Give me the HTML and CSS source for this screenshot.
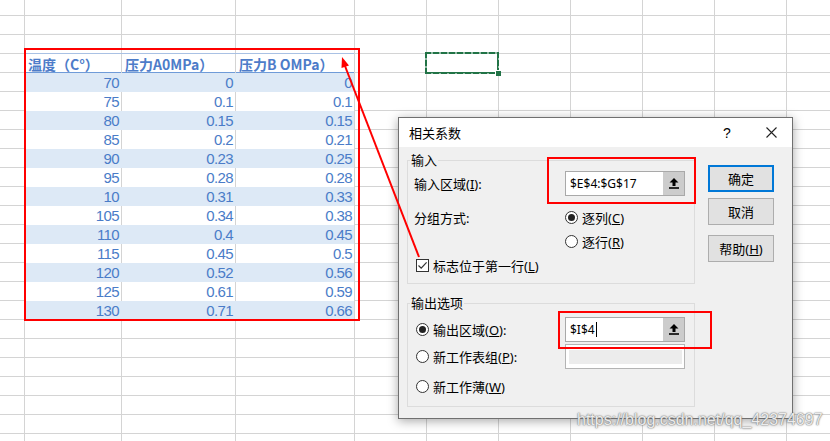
FILE: index.html
```html
<!DOCTYPE html>
<html lang="zh-CN">
<head>
    <meta charset="UTF-8">
    <title>相关系数</title>
    <link rel="stylesheet" href="styles.css">
</head>
<body>
    <!-- 工作表 -->
    <div class="sheet">
        <div class="datatable">
            <div class="trow thead">
                <div class="c">温度（C°）</div>
                <div class="c">压力A0MPa）</div>
                <div class="c">压力B OMPa）</div>
            </div>
            <div class="trow band"><div class="c">70</div><div class="c">0</div><div class="c">0</div></div>
            <div class="trow"><div class="c">75</div><div class="c">0.1</div><div class="c">0.1</div></div>
            <div class="trow band"><div class="c">80</div><div class="c">0.15</div><div class="c">0.15</div></div>
            <div class="trow"><div class="c">85</div><div class="c">0.2</div><div class="c">0.21</div></div>
            <div class="trow band"><div class="c">90</div><div class="c">0.23</div><div class="c">0.25</div></div>
            <div class="trow"><div class="c">95</div><div class="c">0.28</div><div class="c">0.28</div></div>
            <div class="trow band"><div class="c">10</div><div class="c">0.31</div><div class="c">0.33</div></div>
            <div class="trow"><div class="c">105</div><div class="c">0.34</div><div class="c">0.38</div></div>
            <div class="trow band"><div class="c">110</div><div class="c">0.4</div><div class="c">0.45</div></div>
            <div class="trow"><div class="c">115</div><div class="c">0.45</div><div class="c">0.5</div></div>
            <div class="trow band"><div class="c">120</div><div class="c">0.52</div><div class="c">0.56</div></div>
            <div class="trow"><div class="c">125</div><div class="c">0.61</div><div class="c">0.59</div></div>
            <div class="trow band"><div class="c">130</div><div class="c">0.71</div><div class="c">0.66</div></div>
        </div>
        <!-- 复制选区 -->
        <div class="selection"></div>
    </div>

    <!-- 对话框 -->
    <div class="dialog">
        <div class="titlebar">
            <span class="title">相关系数</span>
            <span class="tb-help">?</span>
            <span class="tb-close">
                <svg width="11" height="11" viewBox="0 0 11 11"><path d="M0.5 0.5 L10.5 10.5 M10.5 0.5 L0.5 10.5" stroke="#222" stroke-width="1.1" fill="none"/></svg>
            </span>
        </div>
        <div class="dlg-body">
            <div class="groups">
                <fieldset class="group group-in">
                    <legend>输入</legend>
                    <div class="row row-first">
                        <span class="lbl">输入区域(<u>I</u>):</span>
                        <div class="refbox">
                            <span class="reftext">$E$4:$G$17</span>
                            <span class="refbtn">
                                <svg width="10" height="11" viewBox="0 0 10 11"><path d="M5 0 L9.5 4.6 L6.5 4.6 L6.5 8 L3.5 8 L3.5 4.6 L0.5 4.6 Z" fill="#000"/><rect x="0" y="9.2" width="10" height="1.6" fill="#000"/></svg>
                            </span>
                        </div>
                    </div>
                    <div class="row row-gap">
                        <span class="lbl">分组方式:</span>
                        <label class="opt"><span class="radio on"></span><span>逐列(<u>C</u>)</span></label>
                    </div>
                    <div class="row">
                        <span class="lbl"></span>
                        <label class="opt"><span class="radio"></span><span>逐行(<u>R</u>)</span></label>
                    </div>
                    <div class="row">
                        <label class="opt opt-side">
                            <span class="check">
                                <svg width="11" height="11" viewBox="0 0 11 11"><path d="M1.5 5.5 L4.2 8.2 L9.6 2.4" stroke="#333" stroke-width="1.2" fill="none"/></svg>
                            </span>
                            <span>标志位于第一行(<u>L</u>)</span>
                        </label>
                    </div>
                </fieldset>

                <fieldset class="group group-out">
                    <legend>输出选项</legend>
                    <div class="row row-first">
                        <label class="opt opt-side lbl"><span class="radio on"></span><span>输出区域(<u>O</u>):</span></label>
                        <div class="refbox">
                            <span class="reftext">$I$4<span class="caret"></span></span>
                            <span class="refbtn">
                                <svg width="10" height="11" viewBox="0 0 10 11"><path d="M5 0 L9.5 4.6 L6.5 4.6 L6.5 8 L3.5 8 L3.5 4.6 L0.5 4.6 Z" fill="#000"/><rect x="0" y="9.2" width="10" height="1.6" fill="#000"/></svg>
                            </span>
                        </div>
                    </div>
                    <div class="row row-near">
                        <label class="opt opt-side lbl"><span class="radio"></span><span>新工作表组(<u>P</u>):</span></label>
                        <div class="namebox"><div class="namebox-in"></div></div>
                    </div>
                    <div class="row row-last">
                        <label class="opt opt-side"><span class="radio"></span><span>新工作薄(<u>W</u>)</span></label>
                    </div>
                </fieldset>
            </div>

            <div class="buttons">
                <button class="btn btn-default">确定</button>
                <button class="btn btn-cancel">取消</button>
                <button class="btn btn-help">帮助(<u>H</u>)</button>
            </div>
        </div>
    </div>

    <!-- 标注 -->
    <div class="mark mark-table"></div>
    <div class="mark mark-in"></div>
    <div class="mark mark-out"></div>
    <svg class="arrow" width="830" height="441" viewBox="0 0 830 441">
        <line x1="419" y1="257" x2="345" y2="66" stroke="#f00" stroke-width="2"/>
        <polygon points="342,57 349,65.5 341.5,68" fill="#f00"/>
    </svg>

    <div class="watermark">https://blog.csdn.net/qq_42374697</div>
</body>
</html>
```

FILE: styles.css
```css
body {
    margin: 0;
    width: 830px;
    height: 441px;
    overflow: hidden;
    position: relative;
    font-family: "Noto Sans CJK SC", sans-serif;
    background: #fff;
}

/* 工作表网格 */
.sheet {
    display: grid;
    grid-template-columns: 24px 96px 113px 118px repeat(6, 71px) 1fr;
    grid-template-rows: 15px repeat(23, 18px);
    gap: 1px;
    height: 441px;
    background-color: #fff;
    background-image:
        linear-gradient(#d4d4d4 0 1px, transparent 1px),
        linear-gradient(to right,
            transparent 24px, #d4d4d4 24px 25px,
            transparent 25px 121px, #d4d4d4 121px 122px,
            transparent 122px 235px, #d4d4d4 235px 236px,
            transparent 236px 354px, #d4d4d4 354px 355px,
            transparent 355px 426px, #d4d4d4 426px 427px,
            transparent 427px 498px, #d4d4d4 498px 499px,
            transparent 499px 570px, #d4d4d4 570px 571px,
            transparent 571px 642px, #d4d4d4 642px 643px,
            transparent 643px 714px, #d4d4d4 714px 715px,
            transparent 715px 786px, #d4d4d4 786px 787px,
            transparent 787px);
    background-size: 100% 19px, 100% 100%;
    background-position: 0 15px, 0 0;
    background-repeat: repeat-y, no-repeat;
}

.datatable {
    grid-column: 2 / 5;
    grid-row: 4 / 18;
    margin: -1px 0;
    display: flex;
    flex-direction: column;
    background: #fff;
    color: #4a7cc8;
}

.trow {
    display: grid;
    grid-template-columns: 97px 114px 118px;
    height: 19px;
    box-sizing: border-box;
}

.trow .c {
    border-right: 1px solid #d4d4d4;
    text-align: right;
    padding: 1px 2px 0 0;
    font-family: "Liberation Sans", Arial, sans-serif;
    font-size: 15px;
    letter-spacing: -0.6px;
    line-height: 18px;
}

.trow .c:last-child {
    border-right: 0;
}

.trow.band {
    background: #dde9f6;
}

.trow.band .c {
    border-right-color: transparent;
}

.thead {
    height: 20px;
    border-top: 1px solid #a9c1e4;
    border-bottom: 1px solid #6f9bd8;
}

.thead .c {
    text-align: left;
    padding: 1px 0 0 3px;
    font-family: "Noto Sans CJK SC", sans-serif;
    font-size: 14px;
    font-weight: 700;
    letter-spacing: 0;
    line-height: 18px;
    color: #4d7cc9;
}

.selection {
    grid-column: 6;
    grid-row: 4;
    margin: -2px -1px -2px -2px;
    border: 2px solid #217346;
    position: relative;
}

.selection::before {
    content: "";
    position: absolute;
    inset: -2px;
    background:
        repeating-linear-gradient(90deg, transparent 0 6px, #fff 6px 8px) top left / 100% 1px no-repeat,
        repeating-linear-gradient(90deg, transparent 0 6px, #fff 6px 8px) bottom left / 100% 1px no-repeat,
        repeating-linear-gradient(180deg, transparent 0 6px, #fff 6px 8px) top left / 1px 100% no-repeat,
        repeating-linear-gradient(180deg, transparent 0 6px, #fff 6px 8px) top right / 1px 100% no-repeat;
    transform: translate(0.5px, 0.5px);
}

.selection::after {
    content: "";
    position: absolute;
    right: -4px;
    bottom: -4px;
    width: 5px;
    height: 5px;
    background: #217346;
    border: 1px solid #fff;
    border-width: 1px 0 0 1px;
}

/* 对话框 */
.dialog {
    position: absolute;
    left: 398px;
    top: 117px;
    width: 395px;
    height: 302px;
    box-sizing: border-box;
    border: 1px solid #707070;
    background: #f0f0f0;
    box-shadow: 0 2px 10px rgba(0, 0, 0, 0.35);
    font-family: "Noto Sans", "Noto Sans CJK SC", sans-serif;
    font-size: 13px;
    color: #000;
}

.titlebar {
    display: flex;
    align-items: center;
    height: 29px;
    background: #fff;
}

.title {
    flex: 1;
    padding-left: 10px;
}

.tb-help {
    width: 46px;
    text-align: center;
    font-family: "Liberation Sans", Arial, sans-serif;
    font-size: 14px;
}

.tb-close {
    width: 42px;
    display: flex;
    justify-content: center;
}

.dlg-body {
    display: flex;
    gap: 13px;
    padding: 5px 0 0 8px;
}

.groups {
    width: 288px;
}

.group {
    margin: 0;
    padding: 0 0 6px 6px;
    border: 1px solid #dcdcdc;
    min-width: 0;
}

.group legend {
    margin-left: -4px;
    padding: 0 1px;
    line-height: 17px;
}

.group-out {
    margin-top: 11px;
    padding-bottom: 8px;
}

.row {
    display: flex;
    align-items: center;
    height: 24px;
}

.row-first {
    height: 25px;
}

.group-in .row-first {
    margin-top: 2px;
}

.group-out .row-first {
    margin-top: 5px;
}

.row-gap {
    margin-top: 9px;
}

.row-near {
    height: 25px;
    margin-top: 2px;
}

.row-last {
    margin-top: 5px;
}

.lbl {
    width: 151px;
    flex: none;
}

.opt {
    display: flex;
    align-items: center;
    gap: 4px;
}

.opt-side {
    padding-left: 2px;
    box-sizing: border-box;
}

.radio {
    width: 13px;
    height: 13px;
    box-sizing: border-box;
    border: 1px solid #333;
    border-radius: 50%;
    background: #fff;
    display: flex;
}

.radio.on::after {
    content: "";
    width: 7px;
    height: 7px;
    margin: auto;
    border-radius: 50%;
    background: #222;
}

.check {
    width: 13px;
    height: 13px;
    box-sizing: border-box;
    border: 1px solid #333;
    background: #fff;
    display: flex;
    align-items: center;
    justify-content: center;
}

.refbox {
    display: flex;
    width: 120px;
    height: 25px;
    box-sizing: border-box;
    border: 1px solid #a9a9a9;
    background: #fff;
}

.reftext {
    flex: 1;
    display: flex;
    align-items: center;
    padding-left: 4px;
    font-family: "Noto Sans", sans-serif;
    font-size: 12px;
}

.caret {
    width: 1px;
    height: 15px;
    background: #000;
    margin-left: 1px;
}

.refbtn {
    width: 21px;
    background: #cccccc;
    display: flex;
    align-items: center;
    justify-content: center;
}

.namebox {
    width: 120px;
    height: 25px;
    box-sizing: border-box;
    border: 1px solid #b4b4b4;
    background: #fff;
    padding: 5px 2px 4px 3px;
}

.namebox-in {
    height: 100%;
    background: #ececec;
}

.buttons {
    display: flex;
    flex-direction: column;
    padding-top: 13px;
}

.btn {
    width: 66px;
    height: 27px;
    box-sizing: border-box;
    border: 1px solid #adadad;
    background: #e1e1e1;
    font-family: "Noto Sans", "Noto Sans CJK SC", sans-serif;
    font-size: 13px;
    color: #000;
    padding: 0;
}

.btn-default {
    border: 2px solid #0078d7;
}

.btn-cancel {
    margin-top: 6px;
}

.btn-help {
    margin-top: 10px;
}

/* 标注 */
.mark {
    position: absolute;
    border: 2px solid #f00;
    box-sizing: border-box;
}

.mark-table {
    left: 24px;
    top: 48px;
    width: 336px;
    height: 273px;
}

.mark-in {
    left: 547px;
    top: 157px;
    width: 149px;
    height: 47px;
}

.mark-out {
    left: 558px;
    top: 311px;
    width: 154px;
    height: 38px;
}

.arrow {
    position: absolute;
    left: 0;
    top: 0;
    pointer-events: none;
}

.watermark {
    position: absolute;
    left: 577px;
    top: 411px;
    font-family: "Liberation Sans", Arial, sans-serif;
    font-size: 16px;
    color: #ececec;
    text-shadow: 0 0 2px #6a6a6a, 0 0 1px #7a7a7a;
    white-space: nowrap;
}
```
